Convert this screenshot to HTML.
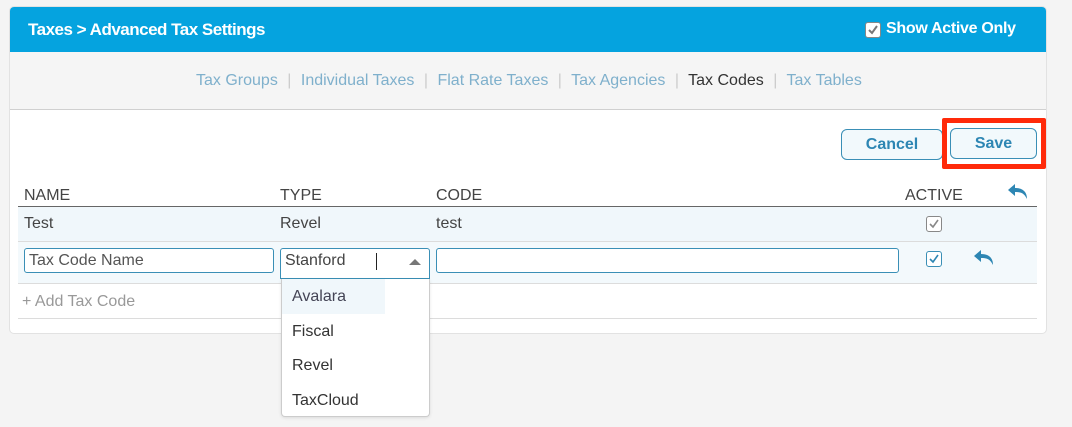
<!DOCTYPE html>
<html><head><style>
*{box-sizing:border-box;margin:0;padding:0}
body{width:1072px;height:427px;background:#f4f4f4;font-family:"Liberation Sans",sans-serif;position:relative;overflow:hidden}
.a{position:absolute}
.card{left:9px;top:6px;width:1038px;height:328px;background:#fff;border:1px solid #e2e2e2;border-radius:5px;overflow:hidden}
.hdr{left:0;top:0;width:100%;height:45px;background:#05a3df;color:#fff}
.tabs{left:0;top:45px;width:100%;height:58px;background:#f5f5f5;border-bottom:1px solid #d0d0d0;font-size:16px;color:#7fb0cc}
.btn{border:1px solid #3a8fb6;border-radius:6px;background:#f2f9fc;color:#2d86b3;font-size:16px;font-weight:bold;text-align:center;line-height:29px;height:31px}
.cb{width:16px;height:16px;border:1px solid #999;border-radius:3px;background:#fff}
.inp{height:25px;border:1px solid #3a8fb6;border-radius:3px;background:#fff;font-size:16px;color:#555;padding-left:4px;line-height:23px}
.dd div{height:34.5px;line-height:36px;padding-left:10px;font-size:16px;color:#333}
.t{font-size:16px;color:#444}
</style></head><body>
<div class="a card">
 <div class="a hdr">
  <div class="a" style="left:18px;top:13px;font-size:17px;font-weight:bold;letter-spacing:-0.5px">Taxes &gt; Advanced Tax Settings</div>
  <div class="a cb" style="left:855px;top:15px;border-color:#888"><svg width="14" height="14" viewBox="0 0 14 14" class="a" style="left:0;top:0"><path d="M3 7l3 3 5-7" stroke="#777" stroke-width="2" fill="none"/></svg></div>
  <div class="a" style="left:876px;top:13px;font-size:16px;font-weight:bold;letter-spacing:-0.3px">Show Active Only</div>
 </div>
 <div class="a tabs">
  <div class="a" style="left:186px;top:20px;white-space:nowrap">Tax Groups <span style="color:#ccc;margin:0 5px">|</span> Individual Taxes <span style="color:#ccc;margin:0 5px">|</span> Flat Rate Taxes <span style="color:#ccc;margin:0 5px">|</span> Tax Agencies <span style="color:#ccc;margin:0 5px">|</span> <span style="color:#333">Tax Codes</span> <span style="color:#ccc;margin:0 5px">|</span> Tax Tables</div>
 </div>
</div>
<div class="a btn" style="left:841px;top:129px;width:102px">Cancel</div>
<div class="a" style="left:942px;top:118px;width:104px;height:51px;border:5px solid #ff2a0a;border-radius:2px"></div>
<div class="a btn" style="left:950px;top:128px;width:87px">Save</div>
<div class="a t" style="left:24px;top:187px">NAME</div>
<div class="a t" style="left:280px;top:187px">TYPE</div>
<div class="a t" style="left:436px;top:187px">CODE</div>
<div class="a t" style="left:905px;top:187px">ACTIVE</div>
<svg class="a" style="left:1006px;top:182px" width="24" height="20" viewBox="0 0 24 20"><path d="M9 2L2 8l7 6V10c6 0 9 1 12 7 0-7-4-11-12-11z" fill="#2d86b3"/></svg>
<div class="a" style="left:18px;top:206px;width:1019px;height:1px;background:#666"></div>
<div class="a" style="left:18px;top:207px;width:1019px;height:35px;background:#f0f7fb;border-bottom:1px solid #dcdcdc"></div>
<div class="a t" style="left:24px;top:215px">Test</div>
<div class="a t" style="left:280px;top:215px">Revel</div>
<div class="a t" style="left:436px;top:215px">test</div>
<div class="a cb" style="left:926px;top:216px;border-color:#888"><svg width="14" height="14" viewBox="0 0 14 14"><path d="M3 7l3 3 5-7" stroke="#888" stroke-width="1.6" fill="none"/></svg></div>
<div class="a" style="left:18px;top:242px;width:1019px;height:42px;background:#f3f9fc;border-bottom:1px solid #dcdcdc"></div>
<div class="a inp" style="left:24px;top:248px;width:250px">Tax Code Name</div>
<div class="a inp" style="left:280px;top:248px;width:150px;height:31px;border-radius:3px 3px 0 0;color:#444;line-height:24px">Stanford<span class="a" style="left:95px;top:4px;width:1px;height:17px;background:#222"></span><span class="a" style="left:128px;top:10px;width:0;height:0;border-left:6px solid transparent;border-right:6px solid transparent;border-bottom:6px solid #777"></span></div>
<div class="a inp" style="left:436px;top:248px;width:463px"></div>
<div class="a cb" style="left:926px;top:251px;border-color:#3a8fb6"><svg width="14" height="14" viewBox="0 0 14 14"><path d="M3 7l3 3 5-7" stroke="#2d86b3" stroke-width="1.6" fill="none"/></svg></div>
<svg class="a" style="left:972px;top:248px" width="24" height="20" viewBox="0 0 24 20"><path d="M9 2L2 8l7 6V10c6 0 9 1 12 7 0-7-4-11-12-11z" fill="#2d86b3"/></svg>
<div class="a" style="left:22px;top:293px;font-size:16px;color:#999">+ Add Tax Code</div>
<div class="a" style="left:18px;top:318px;width:1019px;height:1px;background:#dcdcdc"></div>
<div class="a dd" style="left:281px;top:279px;width:149px;height:138px;background:#fff;border:1px solid #ccc;border-top:none;border-radius:0 0 4px 4px;box-shadow:0 1px 3px rgba(0,0,0,.1)">
 <div style="background:#f0f7fb;width:103px;color:#445">Avalara</div><div>Fiscal</div><div>Revel</div><div>TaxCloud</div>
</div>
</body></html>
